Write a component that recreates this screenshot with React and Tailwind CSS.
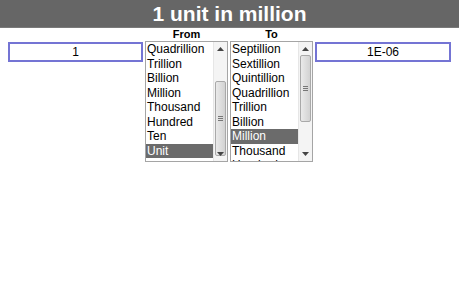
import React from "react";

// Solo los elementos visibles en la lista
const fromUnits = ["Quadrillion", "Trillion", "Billion", "Million", "Thousand", "Hundred", "Ten", "Unit"];
const toUnits = ["Septillion", "Sextillion", "Quintillion", "Quadrillion", "Trillion", "Billion", "Million", "Thousand", "Hundred"];

// Scrollbar falso con flechas, pista y pulgar
const Scrollbar = ({ thumbTop, thumbHeight }) => (
	<div className="relative w-[14px] h-full border-l border-[#e6e6e6] bg-[#f4f4f4]">
		<div className="flex h-[14px] items-center justify-center">
			<svg width="7" height="4" viewBox="0 0 7 4">
				<path d="M0 4 L3.5 0 L7 4 Z" fill="#444" />
			</svg>
		</div>
		<div
			className="absolute left-[1px] right-[1px] flex items-center justify-center rounded-[2px] border border-[#a9a9a9] bg-gradient-to-r from-[#eaeaea] to-[#d2d2d2]"
			style={{ top: thumbTop, height: thumbHeight }}
		>
			<div className="flex flex-col gap-[1px]">
				<div className="h-[1px] w-[5px] bg-[#777]" />
				<div className="h-[1px] w-[5px] bg-[#777]" />
				<div className="h-[1px] w-[5px] bg-[#777]" />
			</div>
		</div>
		<div className="absolute bottom-0 left-0 right-0 flex h-[14px] items-center justify-center">
			<svg width="7" height="4" viewBox="0 0 7 4">
				<path d="M0 0 L3.5 4 L7 0 Z" fill="#444" />
			</svg>
		</div>
	</div>
);

const ListBox = ({ label, items, selected, thumbTop, thumbHeight }) => (
	<div className="flex w-[83px] flex-col">
		<div className="h-[13px] text-center text-[11px] font-bold leading-[13px] text-black">{label}</div>
		<div className="flex h-[121px] border border-[#a5a5a5] bg-white">
			<div className="flex-1 overflow-hidden">
				{items.map((item) => (
					<div
						key={item}
						className={
							item === selected
								? "h-[14.5px] bg-[#6b6b6b] pl-[1px] text-[12px] leading-[14.5px] text-white"
								: "h-[14.5px] pl-[1px] text-[12px] leading-[14.5px] text-black"
						}
					>
						{item}
					</div>
				))}
			</div>
			<Scrollbar thumbTop={thumbTop} thumbHeight={thumbHeight} />
		</div>
	</div>
);

export default function App() {
	return (
		<div className="h-[287px] w-[459px] bg-white font-['Liberation_Sans',Arial,sans-serif]">
			<div className="flex h-[28px] items-center justify-center border-b border-[#7a7a7a] bg-[#666666]">
				<h1 className="text-[21px] font-bold leading-none text-white">1 unit in million</h1>
			</div>
			<div className="flex items-start justify-center gap-[2px]">
				<div className="mt-[14px] flex h-[20px] w-[135px] items-center justify-center border-2 border-[#7474d4] text-[12px] text-black">
					1
				</div>
				<ListBox label="From" items={fromUnits} selected="Unit" thumbTop={39} thumbHeight={75} />
				<ListBox label="To" items={toUnits} selected="Million" thumbTop={13} thumbHeight={67} />
				<div className="mt-[14px] flex h-[20px] w-[136px] items-center justify-center border-2 border-[#7474d4] text-[12px] text-black">
					1E-06
				</div>
			</div>
		</div>
	);
}
